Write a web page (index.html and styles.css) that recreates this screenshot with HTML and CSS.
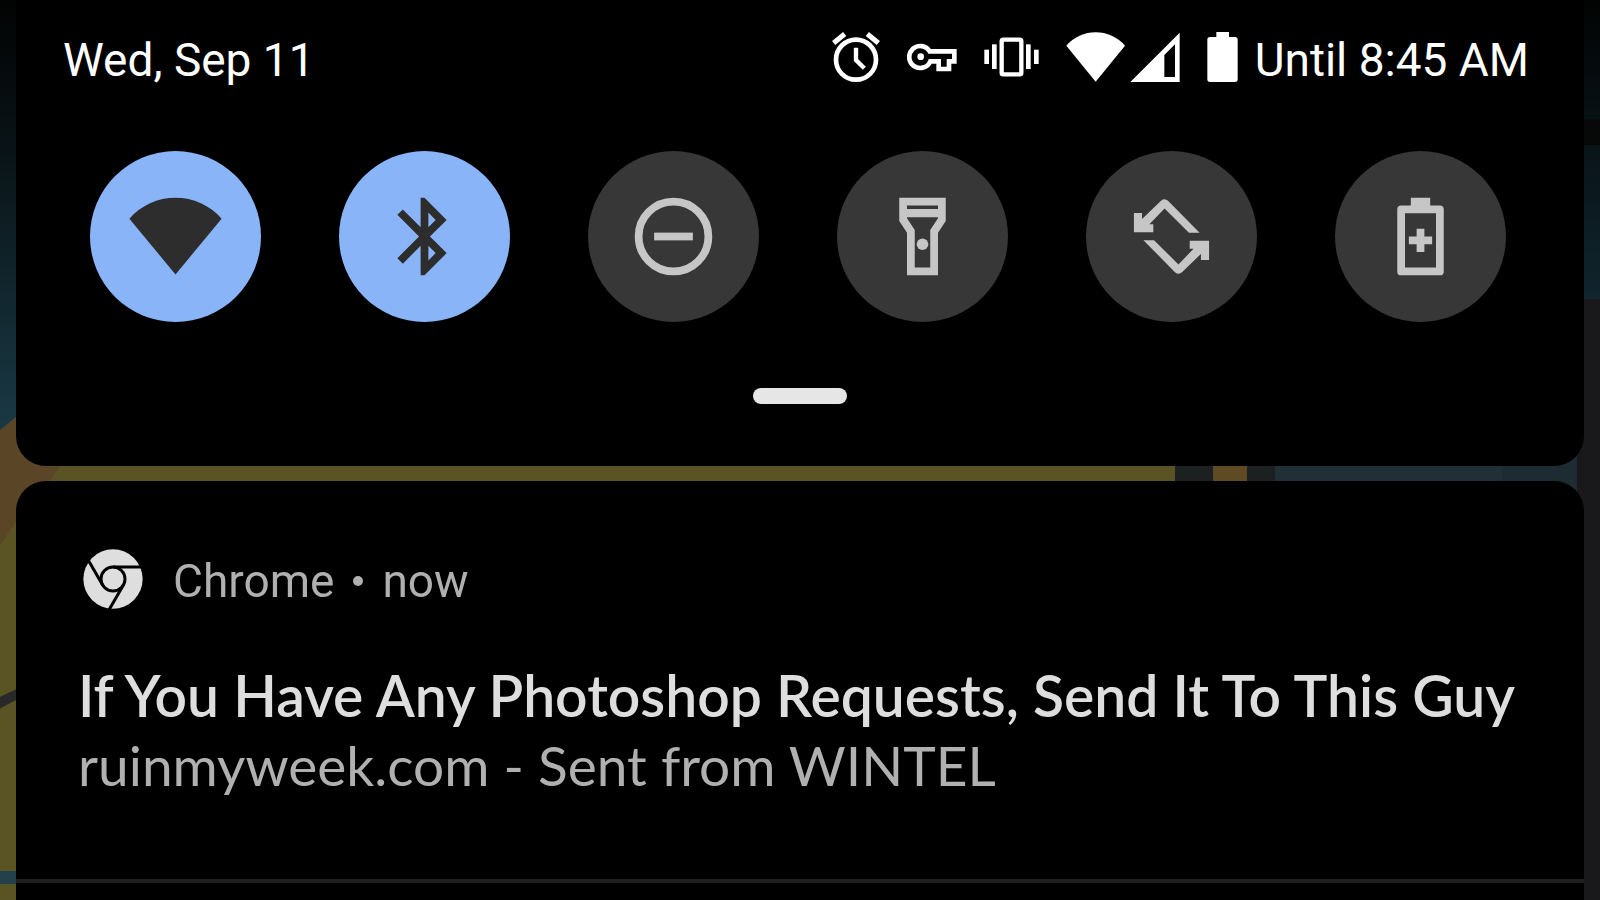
FILE: index.html
```html
<!DOCTYPE html>
<html lang="en">
<head>
    <meta charset="UTF-8">
    <meta name="viewport" content="width=device-width, initial-scale=1.0">
    <title>Notification Shade</title>
    <link rel="stylesheet" href="styles.css">
</head>
<body>
    <!-- Dimmed wallpaper behind the shade -->
    <svg class="wallpaper" viewBox="0 0 1600 900" preserveAspectRatio="none" aria-hidden="true">
        <defs>
            <linearGradient id="sky" x1="0" y1="0" x2="0" y2="1">
                <stop offset="0" stop-color="#020303"/>
                <stop offset="0.3" stop-color="#081114"/>
                <stop offset="1" stop-color="#1a3a46"/>
            </linearGradient>
            <linearGradient id="skyRight" x1="0" y1="0" x2="0" y2="1">
                <stop offset="0" stop-color="#020303"/>
                <stop offset="1" stop-color="#10252e"/>
            </linearGradient>
        </defs>
        <rect width="1600" height="900" fill="#5a5323"/>
        <rect width="1600" height="440" fill="url(#sky)"/>
        <path d="M0 430L16 417L60 466L50 481L16 522L0 545Z" fill="#5a4526"/>
        <path d="M-4 705Q8 698 20 693" stroke="#29292a" stroke-width="10" fill="none"/>
        <rect y="871" width="16" height="13" fill="#23414a"/>
        <rect x="1175" y="440" width="38" height="60" fill="#1d2021"/>
        <rect x="1213" y="440" width="34" height="60" fill="#5f4b23"/>
        <rect x="1247" y="440" width="28" height="60" fill="#1d2021"/>
        <rect x="1275" y="440" width="227" height="60" fill="#212f37"/>
        <rect x="1502" y="440" width="75" height="60" fill="#1d2c33"/>
        <rect x="1577" y="299" width="23" height="601" fill="#19191b"/>
        <rect x="1577" width="23" height="299" fill="url(#skyRight)"/>
        <rect x="1577" y="119" width="23" height="26" fill="#070808"/>
    </svg>

    <main class="shade">
        <!-- Quick settings -->
        <section class="panel quick-settings">
            <header class="status-bar">
                <span class="date">Wed, Sep 11</span>
                <div class="status-icons">
                    <svg width="48" height="50" viewBox="0 0 144 150" fill="none" stroke="currentColor">
                        <circle cx="72" cy="83" r="60" stroke-width="14"/>
                        <path d="M72 47V84L97 109" stroke-width="13"/>
                        <path d="M5 33L38 6M139 33L106 6" stroke-width="15"/>
                    </svg>
                    <svg width="50" height="30" viewBox="0 0 150 90" fill="none" stroke="currentColor">
                        <path d="M68 28H142V58H126V81H95V58H70A33 33 0 1 1 68 28Z" stroke-width="14"/>
                        <circle cx="41" cy="44" r="10" fill="currentColor" stroke="none"/>
                    </svg>
                    <svg width="55" height="40" viewBox="0 0 165 120" fill="currentColor">
                        <rect x="1" y="38" width="14" height="43"/>
                        <rect x="24" y="22" width="14" height="74"/>
                        <rect x="53" y="8" width="59" height="104" rx="5" fill="none" stroke="currentColor" stroke-width="13"/>
                        <rect x="126" y="22" width="14" height="74"/>
                        <rect x="150" y="38" width="14" height="43"/>
                    </svg>
                    <div class="network">
                        <svg width="60" height="50" viewBox="0 0 180 150" fill="currentColor">
                            <path d="M89 149L1 41A117 117 0 0 1 177 41Z"/>
                        </svg>
                        <svg width="50" height="50" viewBox="0 0 150 150" fill="currentColor">
                            <path fill-rule="evenodd" d="M1 150L149 2V150ZM103 69V135H135V37Z"/>
                        </svg>
                    </div>
                    <div class="battery">
                        <svg width="31" height="50" viewBox="0 0 93 150" fill="currentColor">
                            <path d="M28 0H66V15H84Q92 15 92 23V142Q92 150 84 150H9Q1 150 1 142V23Q1 15 9 15H28Z"/>
                        </svg>
                        <span>Until 8:45 AM</span>
                    </div>
                </div>
            </header>

            <div class="tiles">
                <button class="tile active" type="button" aria-label="Wi-Fi">
                    <svg class="tile-icon" viewBox="0 0 24 24">
                        <path d="M12 21.8L.1 7.4A15.8 15.8 0 0 1 23.9 7.4Z"/>
                    </svg>
                </button>
                <button class="tile active" type="button" aria-label="Bluetooth">
                    <svg class="tile-icon" viewBox="0 0 24 24">
                        <path d="M17.71 7.71L12 2h-1v7.59L6.41 5 5 6.41 10.59 12 5 17.59 6.41 19 11 14.41V22h1l5.71-5.71-4.3-4.29 4.3-4.29zM13 5.83l1.88 1.88L13 9.59V5.83zm1.88 10.46L13 18.17v-3.76l1.88 1.88z"/>
                    </svg>
                </button>
                <button class="tile" type="button" aria-label="Do not disturb">
                    <svg class="tile-icon" viewBox="0 0 24 24">
                        <circle cx="12" cy="12" r="9" fill="none" stroke="currentColor" stroke-width="2"/>
                        <rect x="7" y="11" width="10" height="2"/>
                    </svg>
                </button>
                <button class="tile" type="button" aria-label="Flashlight">
                    <svg class="tile-icon" viewBox="0 0 24 24">
                        <path fill-rule="evenodd" d="M6 2h12v6l-2 3v11H8V11L6 8zM8 4v.9h8V4zM8 7v.3l2 3V20h4v-9.7l2-3V7z"/>
                        <circle cx="12" cy="14" r="1.5"/>
                    </svg>
                </button>
                <button class="tile" type="button" aria-label="Auto-rotate">
                    <svg class="tile-icon" viewBox="0 0 24 24">
                        <path id="rotateArrow" d="M9.3 2.75Q10.2 2 11.1 2.8L19.25 11.05H16.5L10.2 4.8L6.3 8.85H7.3V10.9H2.3V5.95H4.4V7.5Z"/>
                        <use href="#rotateArrow" transform="rotate(180 12 12)"/>
                    </svg>
                </button>
                <button class="tile" type="button" aria-label="Battery saver">
                    <svg class="tile-icon" viewBox="0 0 24 24">
                        <path fill-rule="evenodd" d="M9.5 2h5v2H17q1 0 1 1v16q0 1-1 1H7q-1 0-1-1V5q0-1 1-1h2.5zM8 6v14h8V6z"/>
                        <path d="M11 10h2v2h2v2h-2v2h-2v-2H9v-2h2z"/>
                    </svg>
                </button>
            </div>

            <div class="handle"></div>
        </section>

        <!-- Notifications -->
        <section class="panel notifications">
            <article class="notification">
                <div class="app-row">
                    <svg class="app-icon" viewBox="0 0 180 180">
                        <circle cx="90" cy="90" r="89" fill="#dedede"/>
                        <g fill="none" stroke="#000" stroke-width="9">
                            <circle cx="90" cy="90" r="36"/>
                            <path id="spoke" d="M90 54H180"/>
                            <use href="#spoke" transform="rotate(120 90 90)"/>
                            <use href="#spoke" transform="rotate(240 90 90)"/>
                        </g>
                    </svg>
                    <span class="app-name">Chrome</span>
                    <span class="dot"></span>
                    <span class="app-time">now</span>
                </div>
                <h1 class="title">If You Have Any Photoshop Requests, Send It To This Guy</h1>
                <p class="text">ruinmyweek.com - Sent from WINTEL</p>
            </article>
        </section>
    </main>
</body>
</html>
```
FILE: styles.css
```css
* {
    box-sizing: border-box;
}
body {
    margin: 0;
    background-color: #000;
    font-family: Roboto, sans-serif;
    color: #fff;
}
svg {
    display: block;
    flex-shrink: 0;
}
.wallpaper {
    position: fixed;
    top: 0;
    left: 0;
    width: 100%;
    height: 100%;
}
.shade {
    position: relative; /* keep above the wallpaper */
    display: flex;
    flex-direction: column;
    gap: 15px;
    min-height: 100vh;
    padding: 0 16px;
}
.panel {
    background-color: #000;
}
.quick-settings {
    padding: 28px 0 62px;
    border-radius: 0 0 30px 30px;
}
.status-bar {
    display: flex;
    align-items: center;
    justify-content: space-between;
    padding: 0 55px 0 47px;
    font-size: 46px;
    line-height: 64px;
    white-space: nowrap;
}
.status-icons {
    display: flex;
    align-items: center;
    gap: 27px;
}
.status-icons svg {
    margin-bottom: 6px;
}
.network {
    display: flex;
    gap: 4px;
}
.battery {
    display: flex;
    align-items: center;
    gap: 17px;
}
.tiles {
    display: flex;
    justify-content: space-between;
    padding: 0 78px 0 74px;
    margin-top: 59px;
}
.tile {
    display: flex;
    align-items: center;
    justify-content: center;
    width: 171px;
    height: 171px;
    padding: 0;
    border: none;
    border-radius: 50%;
    background-color: #373737;
    color: #c6c6c6;
    cursor: pointer;
}
.tile.active {
    background-color: #8ab4f8;
    color: #2d2d2d;
}
.tile-icon {
    width: 93px;
    height: 93px;
    fill: currentColor;
}
.handle {
    width: 94px;
    height: 16px;
    margin: 66px auto 0;
    border-radius: 8px;
    background-color: #e6e6e6;
}
.notifications {
    flex: 1;
    border-radius: 30px 30px 0 0;
}
.notification {
    padding: 68px 62px 79px;
    border-bottom: 4px solid #1f1f20;
}
.app-row {
    display: flex;
    align-items: center;
    color: #b0b0b0;
    font-size: 46px;
    line-height: 64px;
}
.app-icon {
    width: 60px;
    height: 60px;
    margin: 0 30px 4px 5px;
}
.dot {
    width: 10px;
    height: 10px;
    margin: 0 19px;
    border-radius: 50%;
    background-color: #b0b0b0;
}
.title,
.text {
    margin: 0;
    font-family: Lato, sans-serif;
    line-height: 70px;
}
.title {
    margin-top: 47px;
    color: #dedede;
    font-size: 57px;
    font-weight: 600;
}
.text {
    color: #b0b0b0;
    font-size: 55px;
}
```
